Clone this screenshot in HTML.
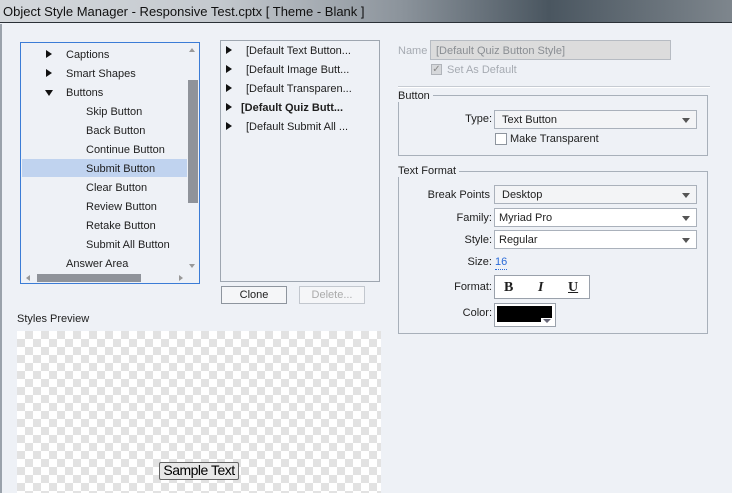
<!DOCTYPE html>
<html><head><style>
*{box-sizing:border-box;margin:0;padding:0}
body{width:732px;height:493px;overflow:hidden;background:#eef1f6;font-family:"Liberation Sans",sans-serif;font-size:11px;color:#1e1e1e;position:relative}
.a{position:absolute}
.title{left:0;top:0;width:732px;height:23px;background:linear-gradient(90deg,#d4d8dc 0%,#c4c9ce 30%,#8b939b 55%,#4a5660 75%,#7e868d 100%);border-bottom:1px solid #2a3036}
.title span{position:absolute;left:3px;top:4px;font-size:13px;color:#111}
.edge{left:0;top:24px;width:2px;height:469px;background:#9aa2ab}
.tree{left:20px;top:42px;width:180px;height:242px;border:1px solid #3b7cd6;background:#eef1f6}
.t{position:absolute;font-size:11px}
.tri{position:absolute;width:0;height:0;border-top:4px solid transparent;border-bottom:4px solid transparent;border-left:6px solid #111}
.trid{position:absolute;width:0;height:0;border-left:4px solid transparent;border-right:4px solid transparent;border-top:6px solid #111}
.list{left:220px;top:40px;width:160px;height:242px;border:1px solid #9ea6b0}
.btn{height:18px;border:1px solid #8e959e;background:#f5f6f8;text-align:center;line-height:16px;font-size:11px}
.sel{position:absolute;border:1px solid #aab1bb;background:#fff;height:19px}
.sel span{position:absolute;left:7px;top:3px}
.sel i{position:absolute;right:6px;top:7px;border-left:4px solid transparent;border-right:4px solid transparent;border-top:5px solid #555}
.grp{border:1px solid #a8b0ba}
.lab{position:absolute;text-align:right}
.check{background-image:linear-gradient(45deg,#e2e2e2 25%,transparent 25%,transparent 75%,#e2e2e2 75%),linear-gradient(45deg,#e2e2e2 25%,transparent 25%,transparent 75%,#e2e2e2 75%);background-size:16px 16px;background-position:0 0,8px 8px;background-color:#fff}
</style></head><body>
<div class="a title"><span>Object Style Manager - Responsive Test.cptx [ Theme - Blank ]</span></div>
<div class="a edge"></div>

<div class="a tree">
 <div class="a" style="left:1px;top:116px;width:165px;height:18px;background:#c0d3ef"></div>
 <div class="tri" style="left:25px;top:7px"></div><div class="t" style="left:45px;top:6px">Captions</div>
 <div class="tri" style="left:25px;top:26px"></div><div class="t" style="left:45px;top:25px">Smart Shapes</div>
 <div class="trid" style="left:24px;top:47px"></div><div class="t" style="left:45px;top:44px">Buttons</div>
 <div class="t" style="left:65px;top:63px">Skip Button</div>
 <div class="t" style="left:65px;top:82px">Back Button</div>
 <div class="t" style="left:65px;top:101px">Continue Button</div>
 <div class="t" style="left:65px;top:120px">Submit Button</div>
 <div class="t" style="left:65px;top:139px">Clear Button</div>
 <div class="t" style="left:65px;top:158px">Review Button</div>
 <div class="t" style="left:65px;top:177px">Retake Button</div>
 <div class="t" style="left:65px;top:196px">Submit All Button</div>
 <div class="t" style="left:45px;top:215px">Answer Area</div>
 <div class="a" style="left:167px;top:37px;width:10px;height:123px;background:#8f939a"></div>
 <div class="a" style="left:168px;top:5px;border-left:3px solid transparent;border-right:3px solid transparent;border-bottom:4px solid #999"></div>
 <div class="a" style="left:168px;top:221px;border-left:3px solid transparent;border-right:3px solid transparent;border-top:4px solid #999"></div>
 <div class="a" style="left:16px;top:231px;width:104px;height:8px;background:#8f939a"></div>
 <div class="a" style="left:5px;top:232px;border-top:3px solid transparent;border-bottom:3px solid transparent;border-right:4px solid #999"></div>
 <div class="a" style="left:158px;top:232px;border-top:3px solid transparent;border-bottom:3px solid transparent;border-left:4px solid #999"></div>
</div>

<div class="a list">
 <div class="tri" style="left:5px;top:5px"></div><div class="t" style="left:25px;top:4px">[Default Text Button...</div>
 <div class="tri" style="left:5px;top:24px"></div><div class="t" style="left:25px;top:23px">[Default Image Butt...</div>
 <div class="tri" style="left:5px;top:43px"></div><div class="t" style="left:25px;top:42px">[Default Transparen...</div>
 <div class="tri" style="left:5px;top:62px"></div><div class="t" style="left:20px;top:61px;font-weight:bold">[Default Quiz Butt...</div>
 <div class="tri" style="left:5px;top:81px"></div><div class="t" style="left:25px;top:80px">[Default Submit All ...</div>
</div>
<div class="a btn" style="left:221px;top:286px;width:66px;line-height:17px">Clone</div>
<div class="a btn" style="left:299px;top:286px;width:66px;color:#aaa;border-color:#c2c7ce;line-height:17px">Delete...</div>

<div class="a" style="left:17px;top:313px">Styles Preview</div>
<div class="a check" style="left:17px;top:331px;width:364px;height:162px"></div>
<div class="a" style="left:159px;top:462px;width:80px;height:18px;border:1px solid #666;border-radius:2px;background:#e8e8e8;font-size:14px;line-height:15px;text-align:center;letter-spacing:-0.5px;color:#000">Sample Text</div>

<div class="a" style="left:398px;top:45px;color:#a6abb2">Name</div>
<div class="a" style="left:430px;top:40px;width:241px;height:20px;border:1px solid #b6bbc2;background:#dcdcdc;color:#8a8e93;padding:4px 5px">[Default Quiz Button Style]</div>
<div class="a" style="left:431px;top:64px;width:11px;height:11px;border:1px solid #b0b4ba;background:#d6d8db;color:#888;font-size:10px;line-height:9px;text-align:center">✓</div>
<div class="a" style="left:447px;top:64px;color:#a6abb2">Set As Default</div>
<div class="a" style="left:398px;top:86px;width:312px;height:2px;border-top:1px solid #c6cbd2;border-bottom:1px solid #fff"></div>

<div class="a grp" style="left:398px;top:95px;width:310px;height:61px"></div>
<div class="a" style="left:396px;top:90px;background:#eef1f6;padding:0 3px 0 2px">Button</div>
<div class="lab" style="left:420px;top:113px;width:72px">Type:</div>
<div class="sel" style="left:494px;top:110px;width:203px;background:#f3f4f6"><span>Text Button</span><i></i></div>
<div class="a" style="left:495px;top:133px;width:12px;height:12px;border:1px solid #8e959e;background:#fff"></div>
<div class="a" style="left:510px;top:133px">Make Transparent</div>

<div class="a grp" style="left:398px;top:171px;width:310px;height:163px"></div>
<div class="a" style="left:396px;top:165px;background:#eef1f6;padding:0 3px 0 2px">Text Format</div>
<div class="lab" style="left:400px;top:189px;width:90px">Break Points</div>
<div class="sel" style="left:494px;top:185px;width:203px;background:#f3f4f6"><span>Desktop</span><i></i></div>
<div class="lab" style="left:400px;top:212px;width:92px">Family:</div>
<div class="sel" style="left:494px;top:208px;width:203px"><span style="left:4px">Myriad Pro</span><i></i></div>
<div class="lab" style="left:400px;top:234px;width:92px">Style:</div>
<div class="sel" style="left:494px;top:230px;width:203px"><span style="left:4px">Regular</span><i></i></div>
<div class="lab" style="left:400px;top:256px;width:92px">Size:</div>
<div class="a" style="left:495px;top:256px;color:#2a6bd8;border-bottom:1px dotted #2a6bd8;line-height:13px">16</div>
<div class="lab" style="left:400px;top:281px;width:92px">Format:</div>
<div class="a" style="left:494px;top:275px;width:96px;height:24px;border:1px solid #9aa1ab;background:#fff;font-family:'Liberation Serif',serif;font-size:14px">
 <b class="a" style="left:9px;top:4px">B</b><i class="a" style="left:43px;top:4px;font-weight:bold">I</i><u class="a" style="left:73px;top:4px;font-weight:bold">U</u></div>
<div class="lab" style="left:400px;top:307px;width:92px">Color:</div>
<div class="a" style="left:494px;top:303px;width:62px;height:24px;border:1px solid #9aa1ab;background:#fff">
 <div class="a" style="left:2px;top:2px;width:55px;height:16px;background:#000"></div>
 <div class="a" style="left:46px;top:14px;width:11px;height:7px;background:#fff"></div>
 <div class="a" style="left:48px;top:15px;border-left:4px solid transparent;border-right:4px solid transparent;border-top:4px solid #667"></div>
</div>
</body></html>
